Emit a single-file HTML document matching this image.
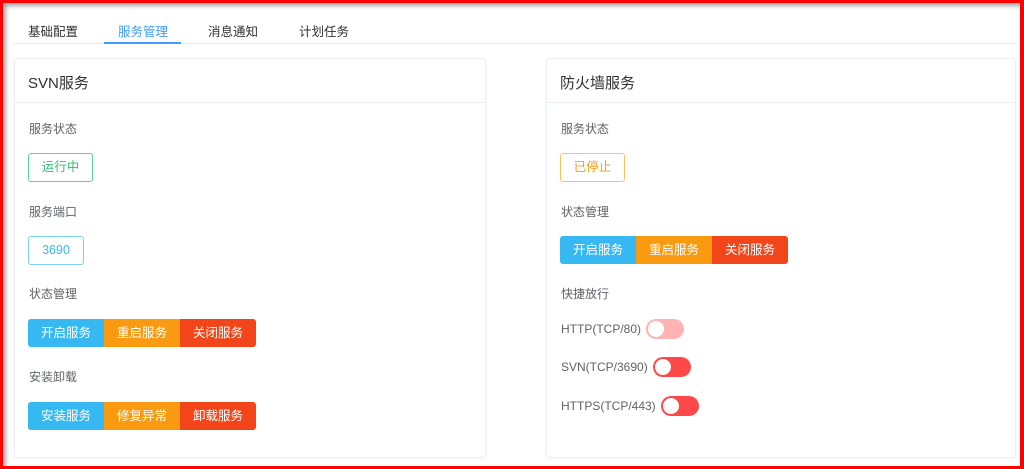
<!DOCTYPE html><html><head><meta charset="utf-8"><style>
*{box-sizing:border-box;margin:0;padding:0}
body{width:1024px;height:469px;background:#fff;font-family:"Liberation Sans","Noto Sans CJK SC",sans-serif;position:relative;overflow:hidden}
.frame{position:absolute;left:0;top:0;width:1024px;height:469px;border:3px solid #f00;border-right-width:4px;box-shadow:inset 3px 3px 4px rgba(0,0,0,.35)}
.tab{position:absolute;top:21px;font-size:12.5px;color:#303133}
.line{position:absolute;left:14px;top:43px;width:1003px;height:1px;background:#e4e7ed}
.ul{position:absolute;left:104px;top:42px;width:77px;height:2px;background:#409eff}
.card{position:absolute;top:58px;height:400px;border:1px solid #ebeef5;border-radius:4px;box-shadow:0 1px 4px rgba(0,0,0,.05)}
.hd{height:44px;border-bottom:1px solid #ebeef5;padding:13px 13px;font-size:15px;color:#303133}
.lbl{position:absolute;left:14px;font-size:12px;color:#606266}
.tag{position:absolute;left:13px;height:29px;border:1px solid;border-radius:3px;font-size:12.5px;line-height:27px;text-align:center}
.bg{position:absolute;left:13px;height:28px;display:flex}
.bg span{width:76px;height:28px;line-height:28px;text-align:center;color:#fff;font-size:12.5px}
.b1{background:#36b9f2;border-radius:3px 0 0 3px}.b2{background:#fa9a10}.b3{background:#f2461a;border-radius:0 3px 3px 0}
.sw{position:absolute;left:14px;font-size:12px;color:#606266;display:flex;align-items:center}
.t{display:inline-block;width:38px;height:20px;border-radius:10px;background:#ff4949;position:relative;margin-left:5px}
.t:after{content:"";position:absolute;left:2px;top:2px;width:16px;height:16px;border-radius:50%;background:#fff}
</style></head><body>
<div class="tab" style="left:28px">基础配置</div>
<div class="tab" style="left:118px;color:#409eff">服务管理</div>
<div class="tab" style="left:208px">消息通知</div>
<div class="tab" style="left:299px">计划任务</div>
<div class="line"></div><div class="ul"></div>
<div class="card" style="left:14px;width:472px">
<div class="hd">SVN服务</div>
<div class="lbl" style="top:61px">服务状态</div>
<div class="tag" style="top:94px;width:65px;border-color:#5dd39a;color:#2fbf71">运行中</div>
<div class="lbl" style="top:144px">服务端口</div>
<div class="tag" style="top:177px;width:56px;border-color:#7dd0f5;color:#36b9f2">3690</div>
<div class="lbl" style="top:226px">状态管理</div>
<div class="bg" style="top:260px"><span class="b1">开启服务</span><span class="b2">重启服务</span><span class="b3">关闭服务</span></div>
<div class="lbl" style="top:309px">安装卸载</div>
<div class="bg" style="top:343px"><span class="b1">安装服务</span><span class="b2">修复异常</span><span class="b3">卸载服务</span></div>
</div>
<div class="card" style="left:546px;width:470px">
<div class="hd">防火墙服务</div>
<div class="lbl" style="top:61px">服务状态</div>
<div class="tag" style="top:94px;width:65px;border-color:#fbc25b;color:#fa9a10">已停止</div>
<div class="lbl" style="top:144px">状态管理</div>
<div class="bg" style="top:177px"><span class="b1">开启服务</span><span class="b2">重启服务</span><span class="b3">关闭服务</span></div>
<div class="lbl" style="top:226px">快捷放行</div>
<div class="sw" style="top:260px">HTTP(TCP/80)<span class="t" style="background:#ffb4b4"></span></div>
<div class="sw" style="top:298px">SVN(TCP/3690)<span class="t"></span></div>
<div class="sw" style="top:337px">HTTPS(TCP/443)<span class="t"></span></div>
</div>
<div class="frame"></div>
</body></html>
